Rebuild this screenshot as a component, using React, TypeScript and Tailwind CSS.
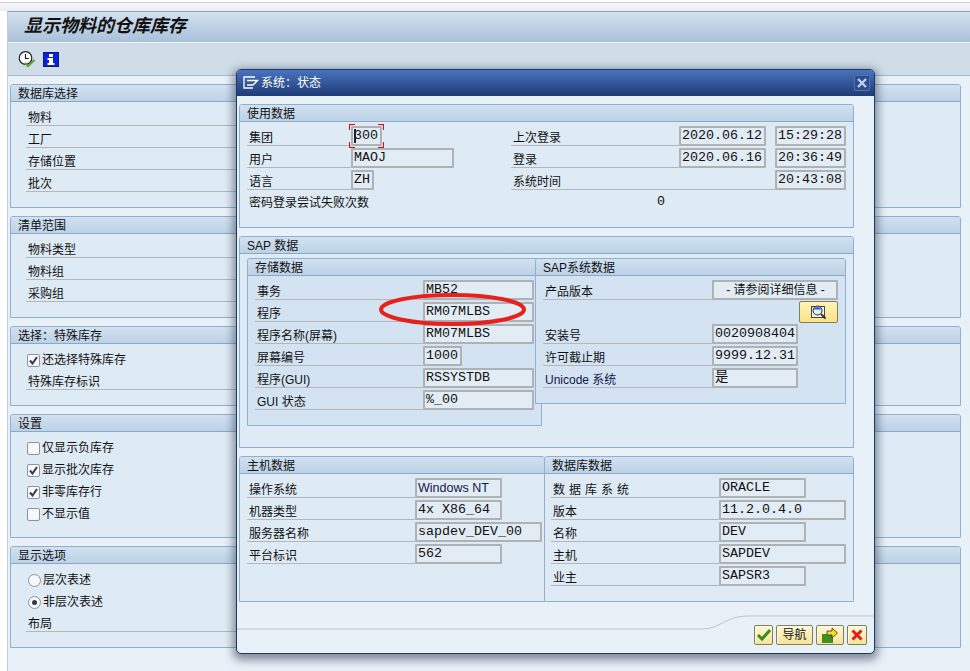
import React from "react";

const MONO = "font-['Liberation_Mono','Noto_Sans_CJK_SC',monospace] text-[13.33px]";

function Group({
  title,
  className,
  inner,
  children,
}: {
  title: string;
  className: string;
  inner?: boolean;
  children: React.ReactNode;
}) {
  return (
    <div className={`shrink-0 rounded-t-[3px] border border-[#8fb0d0] ${inner ? "bg-[#d3e3f1]" : "bg-[#deeaf4]"} ${className}`}>
      <div className="flex h-[17px] items-center rounded-t-[2px] border-b border-[#8aa9c9] bg-gradient-to-b from-[#d2e1f0] to-[#bcd2e6] pl-[7px] pt-[2px] leading-[16px]">
        {title}
      </div>
      {children}
    </div>
  );
}

function Field({ value, w, sans }: { value: string; w: string; sans?: string }) {
  return (
    <div
      className={`flex h-[20px] shrink-0 items-center overflow-hidden whitespace-pre rounded-[1px] border-2 border-[#aeb2b5] bg-[#e2ecf4] pl-[1px] ${sans ?? MONO} ${w}`}
    >
      {value}
    </div>
  );
}

function Row({ label, labelW, children }: { label: string; labelW: string; children?: React.ReactNode }) {
  return (
    <div className="flex h-[22px] items-end">
      <div className={`h-full shrink-0 border-b border-[#b4b7b9] pl-[2px] pt-[6px] leading-[16px] ${labelW}`}>{label}</div>
      {children}
    </div>
  );
}

function CheckRow({ label, checked }: { label: string; checked: boolean }) {
  return (
    <div className="flex h-[22px] items-center gap-[2px] pl-[1px] pt-[7px]">
      <span className="flex h-[13px] w-[13px] items-center justify-center rounded-[2px] border border-[#8e9499] bg-[#f6f8fa]">
        {checked && (
          <svg width="9" height="9" viewBox="0 0 9 9" fill="none">
            <path d="M1 4.5 L3.5 7.5 L8 1" stroke="#333a50" strokeWidth="2" />
          </svg>
        )}
      </span>
      <span className="leading-[17px]">{label}</span>
    </div>
  );
}

function RadioRow({ label, checked }: { label: string; checked: boolean }) {
  return (
    <div className="flex h-[22px] items-center gap-[2px] pl-[2px] pt-[7px]">
      <span className="flex h-[13px] w-[13px] items-center justify-center rounded-full border border-[#8e9499] bg-[#f6f8fa]">
        {checked && <span className="h-[5px] w-[5px] rounded-full bg-[#333a50]" />}
      </span>
      <span className="leading-[17px]">{label}</span>
    </div>
  );
}

function YellowButton({ w, children }: { w: string; children: React.ReactNode }) {
  return (
    <div className={`flex h-[20px] shrink-0 items-center justify-center rounded-[2px] border border-[#7f7e60] bg-gradient-to-b from-[#fef8d2] to-[#f6e396] shadow-[inset_1px_1px_0_#fffdf0] ${w}`}>
      {children}
    </div>
  );
}

export default function App() {
  return (
    <div className="relative h-[671px] w-[970px] overflow-hidden bg-white font-['Liberation_Sans','Noto_Sans_CJK_SC',sans-serif] text-[12px] text-[#111]">
      {/* top strip */}
      <div className="mt-[2px] h-[9px] border-t border-[#c9cfd8] bg-gradient-to-b from-[#f8f9fb] to-[#e8edf2]" />
      <div className="ml-[7px] h-[660px] border-l border-t border-[#c3cbd4] border-t-[#8f9fb3] bg-[#e8f0f8]">
        <div className="flex h-[30px] items-center bg-gradient-to-b from-[#d3e1ee] to-[#aac1da] pb-[2px] pl-[16px] text-[18px] font-bold italic text-[#111]">
          显示物料的仓库库存
        </div>
        <div className="flex h-[34px] items-center gap-[7px] border-y border-y-[#eef3f8] border-b-[#a8b8cc] bg-[#cedde8] pl-[10px]">
          <svg width="18" height="17" viewBox="0 0 18 17" fill="none">
            <circle cx="7.5" cy="7" r="6.3" fill="#fff" stroke="#222" strokeWidth="1.2" />
            <path d="M7.5 3 V7.5 H11" stroke="#222" strokeWidth="1.2" />
            <path d="M7 12 L10 15 L16.5 9" stroke="#5fa22e" strokeWidth="2.2" />
          </svg>
          <svg width="16" height="15" viewBox="0 0 16 15">
            <rect x="0.5" y="0.5" width="15" height="14" fill="#0b22d8" stroke="#0a1a80" />
            <rect x="6" y="2" width="4" height="3" fill="#fff" />
            <path d="M4.5 6 H10 V11 H11.5 V13 H4.5 V11 H6 V8 H4.5 Z" fill="#fff" />
          </svg>
        </div>

        {/* selection screen behind the dialog */}
        <div className="flex flex-col gap-[8px] pl-[2px] pt-[8px]">
          <Group title="数据库选择" className="h-[124px] w-[951px]">
            <div className="pl-[15px] pt-[2px]">
              <Row label="物料" labelW="w-[300px]" />
              <Row label="工厂" labelW="w-[300px]" />
              <Row label="存储位置" labelW="w-[300px]" />
              <Row label="批次" labelW="w-[300px]" />
            </div>
          </Group>
          <Group title="清单范围" className="h-[102px] w-[951px]">
            <div className="pl-[15px] pt-[2px]">
              <Row label="物料类型" labelW="w-[300px]" />
              <Row label="物料组" labelW="w-[300px]" />
              <Row label="采购组" labelW="w-[300px]" />
            </div>
          </Group>
          <Group title="选择：特殊库存" className="h-[80px] w-[951px]">
            <div className="pl-[15px] pt-[2px]">
              <CheckRow label="还选择特殊库存" checked />
              <Row label="特殊库存标识" labelW="w-[300px]" />
            </div>
          </Group>
          <Group title="设置" className="h-[124px] w-[951px]">
            <div className="pl-[15px] pt-[2px]">
              <CheckRow label="仅显示负库存" checked={false} />
              <CheckRow label="显示批次库存" checked />
              <CheckRow label="非零库存行" checked />
              <CheckRow label="不显示值" checked={false} />
            </div>
          </Group>
          <Group title="显示选项" className="h-[102px] w-[951px]">
            <div className="pl-[15px] pt-[2px]">
              <RadioRow label="层次表述" checked={false} />
              <RadioRow label="非层次表述" checked />
              <Row label="布局" labelW="w-[300px]" />
            </div>
          </Group>
        </div>
      </div>

      {/* status dialog */}
      <div className="absolute left-[236px] top-[69px] h-[585px] w-[639px] rounded-[5px] border border-[#1c3768] bg-[#e8f0f8] pl-[2px] shadow-[0_3px_9px_3px_rgba(50,60,80,0.55)]">
        <div className="-ml-[2px] flex h-[26px] items-center justify-between rounded-t-[4px] bg-gradient-to-b from-[#4a74c0] to-[#1e3b76] pl-[6px] pr-[4px] text-white">
          <div className="flex items-center gap-[2px]">
            <svg width="16" height="14" viewBox="0 0 16 14" fill="none" stroke="#fff" strokeWidth="1.3">
              <path d="M12 1 H1 V12 H10" />
              <path d="M4 4.5 H14.5 L10 9 H4" />
            </svg>
            <span>系统：状态</span>
          </div>
          <div className="flex h-[16px] w-[16px] items-center justify-center rounded-[2px] border border-[#5273b0] bg-[#2c4d8c]">
            <svg width="10" height="10" viewBox="0 0 10 10" fill="none">
              <path d="M1 1 L9 9 M9 1 L1 9" stroke="#bcd2f0" strokeWidth="2.4" />
            </svg>
          </div>
        </div>

        <div className="flex flex-col gap-[8px] pt-[8px]">
          <Group title="使用数据" className="h-[124px] w-[615px]">
            <div className="relative pl-[7px] pt-[2px]">
              <div className="flex">
                <div className="w-[264px]">
                  <Row label="集团" labelW="w-[104px]">
                    <div className="relative">
                      <Field value="300" w="w-[31px]" />
                      <span className="absolute left-[3px] top-[3px] h-[14px] w-[2px] bg-[#222]" />
                      <span className="absolute -left-[2px] -top-[2px] h-[6px] w-[6px] border-l border-t border-[#f00000]" />
                      <span className="absolute -right-[2px] -top-[2px] h-[6px] w-[6px] border-r border-t border-[#f00000]" />
                      <span className="absolute -bottom-[2px] -left-[2px] h-[6px] w-[6px] border-b border-l border-[#f00000]" />
                      <span className="absolute -bottom-[2px] -right-[2px] h-[6px] w-[6px] border-b border-r border-[#f00000]" />
                    </div>
                  </Row>
                  <Row label="用户" labelW="w-[104px]">
                    <Field value="MAOJ" w="w-[103px]" />
                  </Row>
                  <Row label="语言" labelW="w-[104px]">
                    <Field value="ZH" w="w-[23px]" />
                  </Row>
                </div>
                <div>
                  <Row label="上次登录" labelW="w-[168px]">
                    <Field value="2020.06.12" w="w-[87px]" />
                    <div className="w-[9px]" />
                    <Field value="15:29:28" w="w-[71px]" />
                  </Row>
                  <Row label="登录" labelW="w-[168px]">
                    <Field value="2020.06.16" w="w-[87px]" />
                    <div className="w-[9px]" />
                    <Field value="20:36:49" w="w-[71px]" />
                  </Row>
                  <Row label="系统时间" labelW="w-[264px]">
                    <Field value="20:43:08" w="w-[71px]" />
                  </Row>
                </div>
              </div>
              <div className="flex h-[22px] items-end pl-[2px]">
                <span className="w-[408px] leading-[17px]">密码登录尝试失败次数</span>
                <span className={MONO}>0</span>
              </div>
            </div>
          </Group>

          <Group title="SAP 数据" className="h-[212px] w-[615px]">
            <div className="flex items-start pl-[7px] pt-[4px]">
              <Group title="存储数据" inner className="h-[168px] w-[295px]">
                <div className="pl-[7px] pt-[2px]">
                  <Row label="事务" labelW="w-[168px]">
                    <Field value="MB52" w="w-[111px]" />
                  </Row>
                  <Row label="程序" labelW="w-[168px]">
                    <Field value="RM07MLBS" w="w-[111px]" />
                  </Row>
                  <Row label="程序名称(屏幕)" labelW="w-[168px]">
                    <Field value="RM07MLBS" w="w-[111px]" />
                  </Row>
                  <Row label="屏幕编号" labelW="w-[168px]">
                    <Field value="1000" w="w-[39px]" />
                  </Row>
                  <Row label="程序(GUI)" labelW="w-[168px]">
                    <Field value="RSSYSTDB" w="w-[111px]" />
                  </Row>
                  <Row label="GUI 状态" labelW="w-[168px]">
                    <Field value="%_00" w="w-[111px]" />
                  </Row>
                </div>
              </Group>
              <Group title="SAP系统数据" inner className="relative -ml-[7px] h-[146px] w-[311px]">
                <div className="pl-[7px] pt-[2px]">
                  <Row label="产品版本" labelW="w-[169px]">
                    <Field value="- 请参阅详细信息 -" w="w-[126px] justify-center" sans="text-[12px]" />
                  </Row>
                  <div className="flex h-[22px] items-start pl-[256px] pt-[1px]">
                    <div className="flex h-[22px] w-[39px] items-center justify-center rounded-[2px] border border-[#7f7e60] bg-gradient-to-b from-[#fef3b8] to-[#fbe284]">
                      <svg width="17" height="17" viewBox="0 0 17 17" fill="none">
                        <rect x="1.5" y="2.5" width="13" height="11" fill="#f4f4ee" stroke="#444" />
                        <circle cx="7.5" cy="6.5" r="4.5" fill="#e8eef6" stroke="#223" />
                        <path d="M3.5 5.5 A4.5 4.5 0 0 1 11.5 5.5 Z" fill="#2a66d0" />
                        <path d="M11 10 L15.5 14.5" stroke="#333" strokeWidth="2" />
                      </svg>
                    </div>
                  </div>
                  <Row label="安装号" labelW="w-[169px]">
                    <Field value="0020908404" w="w-[86px]" />
                  </Row>
                  <Row label="许可截止期" labelW="w-[169px]">
                    <Field value="9999.12.31" w="w-[86px]" />
                  </Row>
                  <Row label="Unicode 系统" labelW="w-[169px] text-[#15154f]">
                    <Field value="是" w="w-[86px]" />
                  </Row>
                </div>
              </Group>
            </div>
          </Group>

          <div className="flex">
            <Group title="主机数据" className="h-[146px] w-[306px]">
              <div className="pl-[7px] pt-[2px]">
                <Row label="操作系统" labelW="w-[168px]">
                  <Field value="Windows NT" w="w-[87px]" sans="text-[12.5px] text-[#15154f]" />
                </Row>
                <Row label="机器类型" labelW="w-[168px]">
                  <Field value="4x X86_64" w="w-[87px]" />
                </Row>
                <Row label="服务器名称" labelW="w-[168px]">
                  <Field value="sapdev_DEV_00" w="w-[127px]" />
                </Row>
                <Row label="平台标识" labelW="w-[168px]">
                  <Field value="562" w="w-[87px]" />
                </Row>
              </div>
            </Group>
            <Group title="数据库数据" className="-ml-px h-[146px] w-[310px]">
              <div className="pl-[6px] pt-[2px]">
                <Row label="数据库系统" labelW="w-[168px] tracking-[4px]">
                  <Field value="ORACLE" w="w-[87px]" />
                </Row>
                <Row label="版本" labelW="w-[168px]">
                  <Field value="11.2.0.4.0" w="w-[127px]" />
                </Row>
                <Row label="名称" labelW="w-[168px]">
                  <Field value="DEV" w="w-[87px]" />
                </Row>
                <Row label="主机" labelW="w-[168px]">
                  <Field value="SAPDEV" w="w-[127px]" />
                </Row>
                <Row label="业主" labelW="w-[168px]">
                  <Field value="SAPSR3" w="w-[87px]" />
                </Row>
              </div>
            </Group>
          </div>
        </div>

        {/* footer with the curved divider */}
        <div className="relative -ml-[2px] flex justify-end gap-[3px] pr-[7px] pt-[23px]">
          <svg className="absolute left-0 top-[12px]" width="637" height="18" viewBox="0 0 637 18" fill="none">
            <path d="M0 15 H466 C482 15 490 2 510 2 H637" stroke="#bfc5cb" />
          </svg>
          <YellowButton w="relative w-[19px]">
            <svg width="14" height="12" viewBox="0 0 14 12" fill="none">
              <path d="M1 6 L5 10 L13 1" stroke="#3d8a1e" strokeWidth="3" />
            </svg>
          </YellowButton>
          <YellowButton w="relative w-[37px]">导航</YellowButton>
          <YellowButton w="relative w-[28px]">
            <svg width="16" height="15" viewBox="0 0 16 15">
              <rect x="0" y="6" width="11" height="9" fill="#3f8f1f" />
              <path d="M5 3 H10 V0 L15.5 5 L10 10 V7 H5 Z" fill="#f6dc1e" stroke="#333" strokeWidth="0.8" />
            </svg>
          </YellowButton>
          <YellowButton w="relative w-[20px]">
            <svg width="12" height="12" viewBox="0 0 12 12" fill="none">
              <path d="M1.5 1.5 L10.5 10.5 M10.5 1.5 L1.5 10.5" stroke="#e01c1c" strokeWidth="3" />
            </svg>
          </YellowButton>
        </div>
      </div>

      {/* hand drawn highlight over the program name */}
      <svg className="absolute left-[376px] top-[290px]" width="152" height="40" viewBox="0 0 152 40" fill="none">
        <ellipse cx="76.5" cy="19.5" rx="71.5" ry="14.5" stroke="#e8211c" strokeWidth="4" />
      </svg>
    </div>
  );
}
